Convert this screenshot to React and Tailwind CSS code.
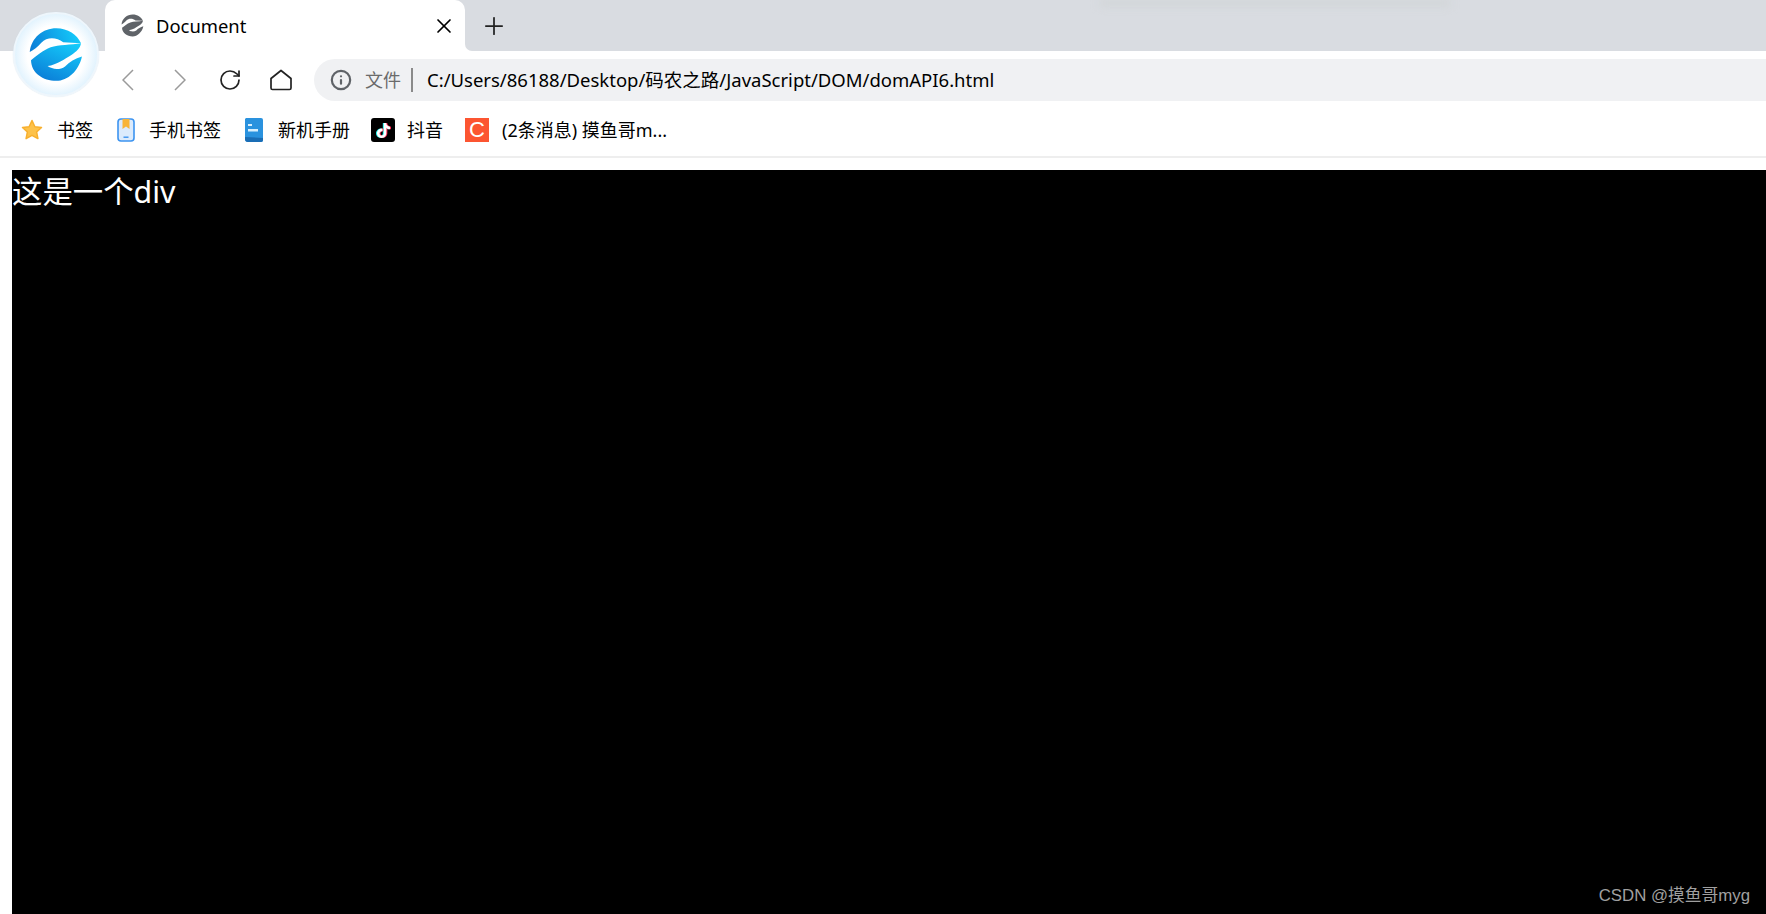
import { Plus, X, RotateCw, Info } from 'lucide-react';
import { SiTiktok } from 'react-icons/si';

const uiFont = "font-['Noto_Sans','Noto_Sans_CJK_SC',sans-serif]";

function EMark({ left = '#5f6368', right = '#5f6368', id = 'mark' }) {
    return (
        <svg viewBox="80 78 174 176" className="block h-full w-full">
            <defs>
                <linearGradient id={`${id}-a`} x1="0" y1="0.6" x2="1" y2="0.4">
                    <stop offset="0" stopColor={left} />
                    <stop offset="1" stopColor={right} />
                </linearGradient>
                <linearGradient id={`${id}-b`} x1="0.9" y1="0" x2="0.3" y2="1">
                    <stop offset="0" stopColor={right} />
                    <stop offset="1" stopColor={left} />
                </linearGradient>
            </defs>
            <path fill={`url(#${id}-a)`} d="M83 158C88 112 125 82 168 82C205 82 235 103 247 130L190 127C168 110 138 110 120 128C108 142 96 150 83 158Z" />
            <path fill={`url(#${id}-b)`} d="M87 184C105 172 125 152 150 143C175 134 215 136 247 130C245 145 232 158 215 168C195 180 170 198 140 203C155 214 180 216 196 204C210 190 228 178 250 172C240 218 205 250 168 250C125 250 88 225 87 184Z" />
        </svg>
    );
}

function BrowserLogo() {
    return (
        <div className="absolute left-[13px] top-[12px] h-[85px] w-[86px] rounded-full border-2 border-[#eef6fc] bg-[radial-gradient(circle_at_50%_50%,#ffffff_50%,#d6eefd_80%,#b9e0fa_100%)] p-[13px] shadow-[0_0_1px_#c8d6e0]">
            <EMark left="#0b7fd8" right="#15cdfb" id="logo" />
        </div>
    );
}

function Chevron({ points }) {
    return (
        <svg viewBox="0 0 12 22" className="h-[22px] w-[12px] shrink-0" fill="none" stroke="#9a9a9a" strokeWidth="1.5">
            <polyline points={points} />
        </svg>
    );
}

function HomeIcon() {
    return (
        <svg viewBox="0 0 22 22" className="h-[22px] w-[22px]" fill="none" stroke="#222" strokeWidth="1.7" strokeLinejoin="round">
            <path d="M11 1.5 L21 9.5 V19 a1.5 1.5 0 0 1 -1.5 1.5 H2.5 A1.5 1.5 0 0 1 1 19 V9.5 Z" />
        </svg>
    );
}

function StarIcon() {
    return (
        <svg viewBox="0 0 24 24" className="h-[24px] w-[24px]">
            <path fill="#fdc24a" stroke="#f8b02e" strokeWidth="1.5" strokeLinejoin="round" d="M12 2.5l2.9 6.2 6.6.8-4.9 4.5 1.3 6.6L12 17.3l-5.9 3.3 1.3-6.6-4.9-4.5 6.6-.8z" />
        </svg>
    );
}

function PhoneIcon() {
    return (
        <svg viewBox="0 0 18 24" className="h-[24px] w-[18px]">
            <rect x="1" y="1" width="16" height="22" rx="3" fill="#dcebfc" stroke="#3d94f0" strokeWidth="1.6" />
            <path fill="#f8b437" d="M5.5 1h7v10l-3.5-2.5L5.5 11z" />
            <rect x="6.5" y="18.5" width="5" height="1.4" fill="#3d94f0" />
        </svg>
    );
}

function ManualIcon() {
    return (
        <svg viewBox="0 0 20 24" className="h-[24px] w-[20px]">
            <path fill="#2a92de" d="M2 0h15a2 2 0 0 1 2 2v20a2 2 0 0 1-2 2H4a3 3 0 0 1-3-3V1z" />
            <path fill="#1a6db5" d="M1 19l18 1v2a2 2 0 0 1-2 2H4a3 3 0 0 1-3-3z" />
            <rect x="4" y="6" width="4" height="2" fill="#d8effd" />
            <rect x="4" y="11" width="10" height="2.5" fill="#d8effd" />
        </svg>
    );
}

function TiktokIcon() {
    return (
        <div className="relative flex h-[24px] w-[24px] items-center justify-center rounded-[3px] bg-black">
            <SiTiktok className="absolute left-[4px] top-[5px] h-[15px] w-[15px] text-[#25f4ee]" />
            <SiTiktok className="absolute left-[5.5px] top-[5px] h-[15px] w-[15px] text-[#fe2c55]" />
            <SiTiktok className="absolute left-[4.8px] top-[4.5px] h-[15px] w-[15px] text-white" />
        </div>
    );
}

function CsdnIcon() {
    return (
        <div className="flex h-[24px] w-[24px] items-center justify-center bg-[#fc5531] font-['Liberation_Sans',sans-serif] text-[22px] leading-none text-white">
            C
        </div>
    );
}

const bookmarks = [
    { label: '书签', icon: <StarIcon />, iconBox: 'w-[24px]', gap: 'mr-[13px]', width: 'w-[36px]', after: 'mr-[24px]' },
    { label: '手机书签', icon: <PhoneIcon />, iconBox: 'w-[18px]', gap: 'mr-[14px]', width: 'w-[72px]', after: 'mr-[23px]' },
    { label: '新机手册', icon: <ManualIcon />, iconBox: 'w-[20px]', gap: 'mr-[14px]', width: 'w-[72px]', after: 'mr-[21px]' },
    { label: '抖音', icon: <TiktokIcon />, iconBox: 'w-[24px]', gap: 'mr-[12px]', width: 'w-[36px]', after: 'mr-[22px]' },
    { label: '(2条消息) 摸鱼哥m...', icon: <CsdnIcon />, iconBox: 'w-[24px]', gap: 'mr-[13px]', width: 'w-[170px]', after: '' },
];

export default function App() {
    return (
        <div className={`relative h-[914px] w-full overflow-hidden bg-white ${uiFont}`}>
            {/* tab strip */}
            <div className="flex h-[51px] bg-[#d9dce1] pl-[105px]">
                <div className="flex h-[51px] w-[360px] items-center rounded-t-[10px] bg-white pl-[16px]">
                    <div className="h-[23px] w-[23px]">
                        <EMark id="tab" />
                    </div>
                    <span className="ml-[12px] flex-1 text-[18.4px] text-black">Document</span>
                    <X className="mr-[9px] h-[24px] w-[24px] text-black" strokeWidth={1.7} />
                </div>
                <div className="w-[60px] bg-white">
                    <div className="flex h-[51px] items-center justify-center rounded-bl-[7px] bg-[#d9dce1] pr-[3px]">
                        <Plus className="h-[28px] w-[28px] text-[#222]" strokeWidth={1.5} />
                    </div>
                </div>
            </div>

            {/* toolbar */}
            <div className="flex h-[50px] items-end pl-[122px]">
                <div className="flex h-[42px] w-full items-center">
                    <Chevron points="11,1 1,11 11,21" />
                    <div className="ml-[40px]">
                        <Chevron points="1,1 11,11 1,21" />
                    </div>
                    <RotateCw className="ml-[32px] h-[24px] w-[24px] text-[#222]" strokeWidth={1.7} />
                    <div className="ml-[28px]">
                        <HomeIcon />
                    </div>
                    <div className="ml-[22px] flex h-[42px] flex-1 items-center rounded-l-[21px] bg-[#f0f1f3] pl-[16px]">
                        <Info className="h-[22px] w-[22px] text-[#5f6368]" strokeWidth={2.4} />
                        <span className="ml-[13px] text-[18px] text-[#6b6b6b]">文件</span>
                        <div className="ml-[10px] h-[24px] w-[2px] bg-[#8a8a8a]" />
                        <span className="ml-[14px] text-[18.5px] text-black">C:/Users/86188/Desktop/码农之路/JavaScript/DOM/domAPI6.html</span>
                    </div>
                </div>
            </div>

            {/* bookmarks bar */}
            <div className="flex h-[55px] items-center pl-[20px] pt-[3px]">
                {bookmarks.map((item) => (
                    <div key={item.label} className={`flex items-center ${item.after}`}>
                        <div className={`${item.gap} ${item.iconBox} shrink-0`}>{item.icon}</div>
                        <span className={`whitespace-nowrap text-[18px] text-black ${item.width}`}>{item.label}</span>
                    </div>
                ))}
            </div>
            <div className="h-[2px] bg-[#eeeeee]" />

            {/* page body */}
            <div className="ml-[12px] mt-[12px] h-[744px] bg-black text-[30.4px] leading-[44px] text-white">
                这是一个div
            </div>

            <BrowserLogo />
            <div className="absolute left-[1100px] top-0 h-[6px] w-[350px] bg-[#d0d4d6] blur-[4px]" />
            <div className="absolute bottom-[6px] right-[16px] font-['Liberation_Sans','Noto_Sans_CJK_SC',sans-serif] text-[16.8px] text-[#a0a0a0]">
                CSDN @摸鱼哥myg
            </div>
        </div>
    );
}
